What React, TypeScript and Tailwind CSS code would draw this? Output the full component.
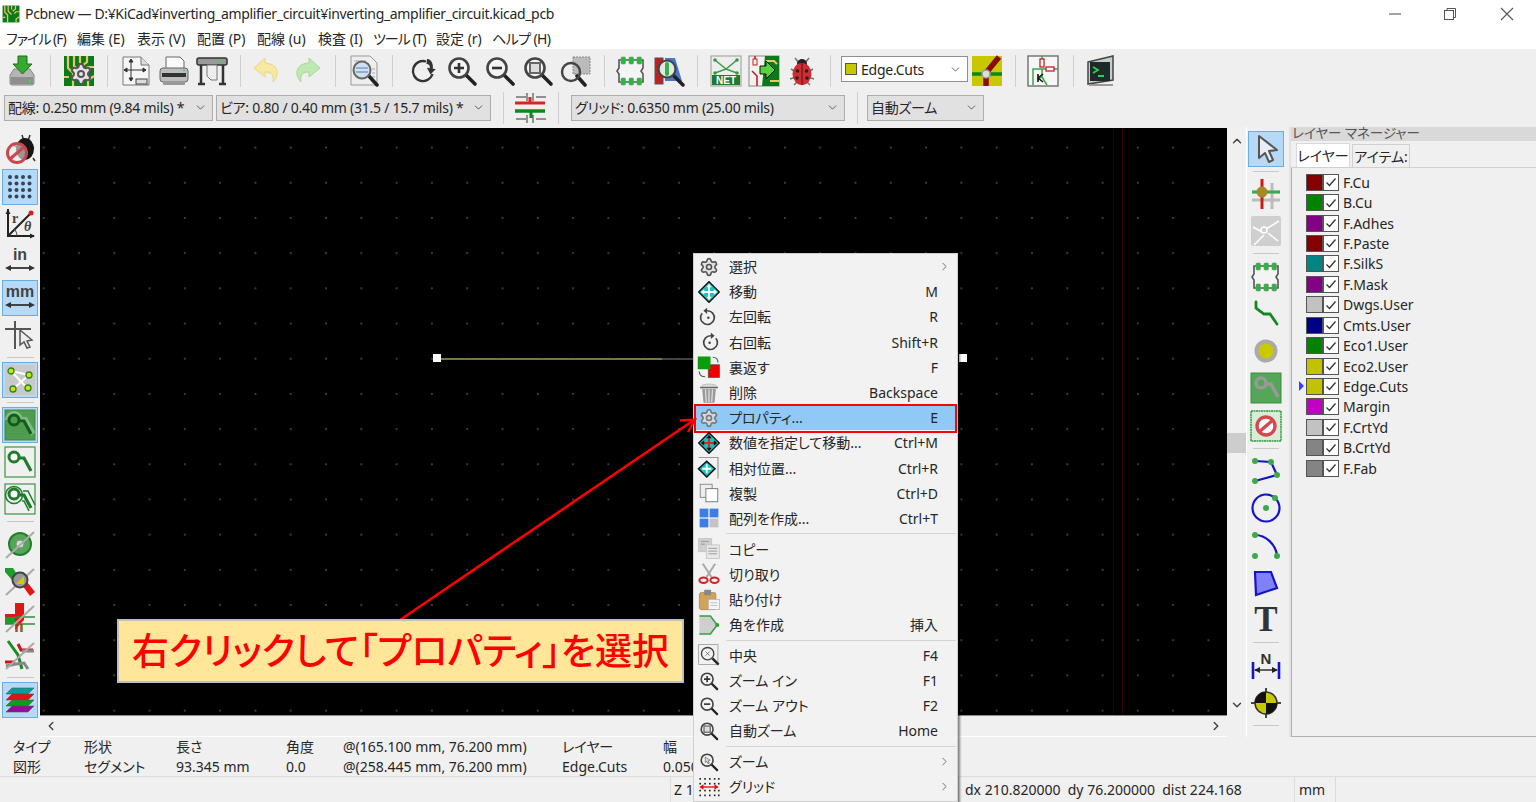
import type { ReactNode } from 'react'
import { ChevronDown, ChevronLeft, ChevronRight, ChevronUp, Settings } from 'lucide-react'

const Svg = ({ s = 32, children }: { s?: number; children: ReactNode }) => (
  <svg viewBox="0 0 32 32" width={s} height={s} className="shrink-0">{children}</svg>
)

const Mag = ({ children }: { children?: ReactNode }) => (
  <>
    <line x1="20" y1="20" x2="29" y2="29" stroke="#222" strokeWidth="3.6" strokeLinecap="round" />
    <circle cx="13" cy="13" r="9.5" fill="#f4f4f4" stroke="#444" strokeWidth="2.6" />
    {children}
  </>
)

const ZoomIn = () => <Mag><path d="M8 13h10M13 8v10" stroke="#333" strokeWidth="2.6" /></Mag>
const ZoomOut = () => <Mag><path d="M8 13h10" stroke="#333" strokeWidth="2.6" /></Mag>
const ZoomFit = () => <Mag><rect x="8" y="8" width="10" height="10" fill="#ddd" stroke="#666" strokeWidth="2" /></Mag>
const ZoomSel = () => (
  <>
    <rect x="13" y="2" width="17" height="17" fill="#bbb" stroke="#888" strokeDasharray="2 1" />
    <line x1="17" y1="21" x2="25" y2="30" stroke="#222" strokeWidth="3.6" strokeLinecap="round" />
    <circle cx="11" cy="17" r="9" fill="none" stroke="#444" strokeWidth="2.4" />
  </>
)

const Pcb = () => (
  <>
    <rect x="1" y="1" width="30" height="30" fill="#0b7a1a" />
    <path d="M5 1v12l5 5v13M11 1v10l6 6M17 1v7M24 1v6l-5 4M31 12h-6l-3 3M1 22h5M25 31v-6l6-4" stroke="#e6c66a" strokeWidth="2.2" fill="none" />
  </>
)

const Gear = ({ c = '#666', cx = 16, cy = 16 }: { c?: string; cx?: number; cy?: number }) => (
  <g transform={`translate(${cx - 12} ${cy - 12})`}>
    <Settings x={0} y={0} width={24} height={24} color={c} strokeWidth={2} fill="#e4e4e4" />
  </g>
)

const Save = () => (
  <Svg>
    <path d="M4 20 8 14h16l4 6v8a2 2 0 0 1-2 2H6a2 2 0 0 1-2-2z" fill="#b5b5b5" stroke="#888" />
    <rect x="5" y="22" width="22" height="7" fill="#8e8e8e" />
    <circle cx="24" cy="26" r="1.2" fill="#3ddc4a" />
    <path d="M12 1h9v8h5L16.500 19 7 9h5z" fill="#37a92f" stroke="#1d6d1c" />
  </Svg>
)

const BoardSetup = () => (
  <Svg><Pcb /><Gear cx={18} cy={19} c="#555" /></Svg>
)

const PageSetup = () => (
  <Svg>
    <path d="M3 2h18l8 8v20H3z" fill="#f6f6f6" stroke="#777" />
    <path d="M21 2v8h8" fill="#ddd" stroke="#777" />
    <path d="M11 4v22M4 15h22M11 4l-2 3h4zM11 26l-2-3h4zM4 15l3-2v4zM26 15l-3-2v4z" stroke="#333" fill="#333" />
    <rect x="16" y="24" width="11" height="5" fill="#ddd" stroke="#444" />
  </Svg>
)

const Printer = () => (
  <Svg>
    <path d="M8 2h14l4 4v8H8z" fill="#fafafa" stroke="#666" />
    <rect x="2" y="13" width="28" height="14" rx="3" fill="#bdbdbd" stroke="#666" />
    <rect x="4" y="18" width="24" height="4" fill="#333" />
    <rect x="5" y="26" width="22" height="4" rx="1" fill="#999" />
    <circle cx="26" cy="15.500" r="1" fill="#3ddc4a" />
  </Svg>
)

const Plotter = () => (
  <Svg>
    <rect x="1" y="3" width="30" height="7" rx="2" fill="#999" stroke="#333" strokeWidth="1.500" />
    <path d="M5 10v18M27 10v18" stroke="#333" strokeWidth="2.500" />
    <path d="M2 29h7M23 29h7" stroke="#333" strokeWidth="2.500" />
    <path d="M11 10h10v15h-6l-4-4z" fill="#eee" stroke="#777" />
    <circle cx="25" cy="6" r="1.300" fill="#3ddc4a" />
  </Svg>
)

const Undo = () => (
  <Svg><path d="M14 3 3 13l11 9v-5c6 0 9 2 8 10 6-6 7-18-8-19z" fill="#f7e9a3" stroke="#ecd67a" /></Svg>
)

const Redo = () => (
  <Svg><path d="M18 3l11 10-11 9v-5c-6 0-9 2-8 10-6-6-7-18 8-19z" fill="#bfe8b2" stroke="#a3dc93" /></Svg>
)

const Find = () => (
  <Svg>
    <path d="M3 1h19l7 7v22H3z" fill="#eee" stroke="#999" />
    <path d="M6 6h12M6 10h6M24 14h3M24 18h3M24 22h3" stroke="#aaa" />
    <line x1="20" y1="20" x2="29" y2="30" stroke="#222" strokeWidth="3.500" strokeLinecap="round" />
    <circle cx="14" cy="15" r="8.500" fill="#cfe0f2" stroke="#666" strokeWidth="2" />
    <path d="M8 13h12M8 17h12" stroke="#7d9ecb" strokeWidth="1.500" />
  </Svg>
)

const Redraw = () => (
  <Svg>
    <path d="M24.500 19A10 10 0 1 1 18 6.500" fill="none" stroke="#333" strokeWidth="2.300" />
    <path d="M18 4c4 0 7 4 7 9h3l-4.500 6L19 13h3c0-3-2-4-4-4z" fill="#333" transform="rotate(8 20 12)" />
  </Svg>
)

const Chip = () => (
  <>
    <path d="M4 5h24v8l-2 3 2 3v8H4v-8l-2-3 2-3z" fill="#f4f4f4" stroke="#555" strokeWidth="1.600" />
    <rect x="6" y="2" width="4.500" height="7" rx="1" fill="#1fbf35" stroke="#888" strokeWidth=".6" />
    <rect x="14" y="2" width="4.500" height="7" rx="1" fill="#1fbf35" stroke="#888" strokeWidth=".6" />
    <rect x="22" y="2" width="4.500" height="7" rx="1" fill="#1fbf35" stroke="#888" strokeWidth=".6" />
    <rect x="6" y="23" width="4.500" height="7" rx="1" fill="#1fbf35" stroke="#888" strokeWidth=".6" />
    <rect x="14" y="23" width="4.500" height="7" rx="1" fill="#1fbf35" stroke="#888" strokeWidth=".6" />
    <rect x="22" y="23" width="4.500" height="7" rx="1" fill="#1fbf35" stroke="#888" strokeWidth=".6" />
  </>
)

const ChipBrowse = () => (
  <Svg>
    <rect x="2" y="3" width="8" height="26" fill="#c41e1e" stroke="#555" />
    <path d="M12 3h10l7 23h-17z" fill="#4a78c9" />
    <line x1="20" y1="20" x2="30" y2="30" stroke="#222" strokeWidth="3.500" strokeLinecap="round" />
    <circle cx="14" cy="14" r="8.500" fill="#dfe9df" stroke="#444" strokeWidth="2.200" />
    <rect x="12" y="7" width="4" height="14" rx="2" fill="#3fae4a" />
  </Svg>
)

const Net = () => (
  <Svg>
    <rect x="1" y="1" width="30" height="30" fill="#eee" stroke="#999" />
    <path d="M5 5l11 9 11-9M5 18l11-4 11 4" stroke="#3a9c47" strokeWidth="1.500" fill="none" />
    <circle cx="5" cy="5" r="1.800" fill="#2f9a3e" /><circle cx="27" cy="5" r="1.800" fill="#2f9a3e" />
    <circle cx="5" cy="18" r="1.800" fill="#2f9a3e" /><circle cx="27" cy="18" r="1.800" fill="#2f9a3e" />
    <rect x="2" y="20" width="28" height="10" fill="#1f7a2d" />
    <text x="16" y="29" textAnchor="middle" fontSize="10" fontWeight="700" fill="#fff" fontFamily="Liberation Sans">NET</text>
  </Svg>
)

const UpdatePcb = () => (
  <Svg>
    <rect x="1" y="1" width="30" height="30" fill="#f2f2f2" stroke="#888" />
    <path d="M17 1h14v30H14z" fill="#0b7a1a" />
    <path d="M18 6h8l3 3M22 26h9" stroke="#e6c66a" strokeWidth="2" fill="none" />
    <path d="M7 1v8M4 16l5 5v10" stroke="#c42020" strokeWidth="1.600" fill="none" />
    <rect x="5" y="4" width="4" height="6" fill="#eee" stroke="#c42020" />
    <path d="M12 11h6V6l9 9-9 9v-5h-6z" fill="#56d13f" stroke="#111" />
  </Svg>
)

const Bug = () => (
  <Svg>
    <path d="M9 3l4 5M23 3l-4 5M5 14l5 3M27 14l-5 3M4 24l6-2M28 24l-6-2M8 30l4-4M24 30l-4-4" stroke="#777" strokeWidth="1.600" />
    <circle cx="16" cy="9" r="5" fill="#222" />
    <ellipse cx="16" cy="19" rx="9.500" ry="11" fill="#cf2d33" />
    <path d="M16 8v22" stroke="#5a1215" />
    <circle cx="11.500" cy="16" r="1.800" fill="#222" /><circle cx="20.500" cy="16" r="1.800" fill="#222" />
    <circle cx="11" cy="23" r="1.800" fill="#222" /><circle cx="21" cy="23" r="1.800" fill="#222" />
  </Svg>
)

const LayerPair = () => (
  <Svg>
    <rect x="1" y="1" width="30" height="30" fill="#c8c800" />
    <path d="M1 19h30" stroke="#0a8a18" strokeWidth="3.500" />
    <path d="M28 2 15 18v13" stroke="#8a0b0b" strokeWidth="5.500" fill="none" />
    <circle cx="15" cy="19" r="4" fill="#ddd" stroke="#999" strokeWidth="1.500" />
  </Svg>
)

const Eeschema = () => (
  <Svg>
    <rect x="1" y="1" width="30" height="30" fill="#f6f6f6" stroke="#777" strokeWidth="1.500" />
    <path d="M15 1v8M15 14H6v16M15 14h5M26 14h5M15 14v8l5 8M15 22l-5 2" stroke="#3ea34a" strokeWidth="1.500" fill="none" />
    <rect x="13" y="4" width="4" height="8" fill="#fff" stroke="#c42020" strokeWidth="1.300" />
    <rect x="19" y="12" width="8" height="4" fill="#fff" stroke="#c42020" strokeWidth="1.300" />
    <path d="M11 19v8M11 23l5-4M11 23l5 4" stroke="#111" strokeWidth="1.600" />
  </Svg>
)

const Terminal = () => (
  <Svg>
    <path d="M3 7 28 1v24L3 29z" fill="#ccc" stroke="#444" strokeWidth="1.500" />
    <rect x="5" y="7" width="20" height="19" fill="#1c2a2a" />
    <path d="M8 12l5 3-5 3M13 21h6" stroke="#2fd24a" strokeWidth="1.800" fill="none" />
    <path d="M4 30h24" stroke="#999" strokeWidth="2" />
  </Svg>
)

const TrackMode = () => (
  <Svg>
    <path d="M2 5h10M22 5h10M13 1v8M19 1v8" stroke="#333" strokeWidth="1" fill="none" />
    <path d="M1 11h30" stroke="#d22" strokeWidth="3" />
    <path d="M16 5v6" stroke="#d22" strokeWidth="3" />
    <path d="M1 19h30" stroke="#0a8a18" strokeWidth="3.500" />
    <path d="M17 19v7" stroke="#0a8a18" strokeWidth="3" />
    <path d="M2 27h10M22 27h10M13 23v8M19 23v8" stroke="#333" strokeWidth="1" fill="none" />
  </Svg>
)

const NoDrc = () => (
  <Svg>
    <path d="M18 1l2 6M26 1l-2 6M13 13l-4-2M29 24l2 3M30 13l-3 2" stroke="#333" strokeWidth="1.500" />
    <ellipse cx="21" cy="15" rx="9" ry="11" fill="#151515" />
    <circle cx="13" cy="19" r="9.500" fill="#eee" fillOpacity=".6" stroke="#c9484f" strokeWidth="3" />
    <path d="M6 25 20 13" stroke="#c9484f" strokeWidth="3" />
  </Svg>
)

const GridDots = () => (
  <Svg>
    {[6, 12.500, 19, 25.500].flatMap(y => [6, 12.500, 19, 25.500].map(x => <circle key={`${x}-${y}`} cx={x} cy={y} r="2" fill="#33465c" />))}
  </Svg>
)

const Polar = () => (
  <Svg>
    <path d="M4 1v27h26M4 28 26 6" stroke="#222" strokeWidth="2" fill="none" />
    <path d="M4 1 1.500 6h5zM31 28l-5-2.500v5z" fill="#222" />
    <circle cx="27" cy="5" r="2.500" fill="#e21a1a" />
    <path d="M13 28c0-3-1-5-3-7" stroke="#444" fill="none" />
    <text x="8" y="15" fontSize="14" fontWeight="700" fill="#444" fontFamily="Liberation Serif">r</text>
    <text x="20" y="23" fontSize="14" fontWeight="700" fontStyle="italic" fill="#444" fontFamily="Liberation Serif">θ</text>
  </Svg>
)

const Unit = ({ t, fs = 16 }: { t: string; fs?: number }) => (
  <Svg>
    <text x="16" y="15" textAnchor="middle" fontSize={fs} fontWeight="700" fill="#444" fontFamily="Liberation Sans">{t}</text>
    <path d="M3 23h26" stroke="#333" strokeWidth="1.800" />
    <path d="M1 23l6-3v6zM31 23l-6-3v6z" fill="#333" />
  </Svg>
)

const CursorCross = () => (
  <Svg>
    <path d="M11 2v28M1 10h26" stroke="#555" strokeWidth="2" />
    <path d="M16 11l0 15 4-3 3 6 3-1-3-6 5-1z" fill="#eee" stroke="#555" strokeWidth="1.500" />
  </Svg>
)

const Ratsnest = () => (
  <Svg>
    <rect x="1" y="1" width="30" height="30" fill="#c9c9c9" />
    <path d="M7 7l18 4M9 25 25 11M7 7l17 18" stroke="#fff" strokeWidth="2" />
    {[[7, 7], [25, 11], [9, 25], [24, 24]].map(([x, y]) => <circle key={x} cx={x} cy={y} r="3" fill="#dede00" stroke="#1a8c22" strokeWidth="1.300" />)}
  </Svg>
)

const Track = ({ c = '#1f7d2a', c2 = '#fff' }: { c?: string; c2?: string }) => (
  <>
    <circle cx="10" cy="11" r="5" fill={c2} stroke={c} strokeWidth="3" />
    <path d="M15 12h5l7 13" stroke={c} strokeWidth="3.200" fill="none" />
  </>
)

const ZoneFill = () => (
  <Svg>
    <rect x="1" y="1" width="30" height="30" fill="#4f9c50" stroke="#3a8c3c" />
    <path d="M4 11a6 6 0 1 1 12 0h5l8 14" stroke="#e7f4e7" strokeWidth="6" fill="none" opacity=".35" />
    <Track c="#0f5e1a" c2="#4f9c50" />
  </Svg>
)

const ZoneLine = () => (
  <Svg>
    <rect x="1" y="1" width="30" height="30" fill="none" stroke="#4e9c53" strokeWidth="1.300" />
    <Track />
  </Svg>
)

const ZoneOutline = () => (
  <Svg>
    <rect x="1" y="1" width="30" height="30" fill="none" stroke="#4e9c53" strokeWidth="1.300" />
    <circle cx="10" cy="12" r="8.500" fill="none" stroke="#1f7d2a" strokeWidth="1.500" />
    <path d="M19 8h5l7 14M18 18h2l5 10" stroke="#1f7d2a" strokeWidth="1.500" fill="none" />
    <Track />
  </Svg>
)

const Slash = () => <path d="M2 30 30 4" stroke="#aaa" strokeWidth="2" />

const ViaOff = () => (
  <Svg>
    <circle cx="16" cy="16" r="11" fill="#56a659" stroke="#257d2c" strokeWidth="2" />
    <circle cx="16" cy="16" r="4" fill="#cfe3cf" stroke="#888" />
    <Slash />
  </Svg>
)

const TrackClear = () => (
  <Svg>
    <path d="M1 3 9 3 14 11 8 15 1 7z" fill="#1aa02a" />
    <path d="M18 20 23 17 31 27 26 31z" fill="#e11616" />
    <Slash />
    <circle cx="16" cy="15" r="7.500" fill="#999" stroke="#444" strokeWidth="2" />
    <path d="M12 19 20 11v8z" fill="#d7c800" />
  </Svg>
)

const PadOff = () => (
  <Svg>
    <path d="M11 1h9v17l-9 10V18H1v-6h10z" fill="#e11616" />
    <rect x="1" y="15" width="10" height="7" fill="#1a9c2a" />
    <path d="M11 22h20M1 22h10M12 22v8M18 22v8M11 15h20" stroke="#2f8c36" strokeWidth="1.500" />
    <path d="M13 22v8M17 22v8" stroke="#e11616" strokeWidth="1.300" />
    <Slash />
  </Svg>
)

const MultiTrack = () => (
  <Svg>
    <path d="M2 2 12 16l4 14" stroke="#1a8c2a" strokeWidth="3" fill="none" transform="translate(2 0)" />
    <path d="M14 5l3 6h12" stroke="#d11414" strokeWidth="3" fill="none" />
    <path d="M18 12h12" stroke="#888" strokeWidth="3" />
    <path d="M1 23h10" stroke="#d11414" strokeWidth="3" />
    <path d="M2 27l10-2 8-1 4 6" stroke="#888" strokeWidth="3" fill="none" />
    <Slash />
  </Svg>
)

const Layers = () => (
  <Svg>
    <path d="M8 4h22l-6 6H2z" fill="#0a9c9c" stroke="#555" strokeWidth=".6" />
    <path d="M8 10h22l-6 6H2z" fill="#e01212" stroke="#555" strokeWidth=".6" />
    <path d="M8 16h22l-6 6H2z" fill="#0e9c1e" stroke="#555" strokeWidth=".6" />
    <path d="M8 22h22l-6 6H2z" fill="#980a98" stroke="#555" strokeWidth=".6" />
  </Svg>
)

const Arrow = () => (
  <Svg><path d="M9 3l0 22 6-5 4 9 4-2-4-9 8-1z" fill="#e8eef4" stroke="#555" strokeWidth="2" strokeLinejoin="round" /></Svg>
)

const LocalRats = () => (
  <Svg>
    <path d="M2 14h28M2 22h28M22 5v26" stroke="#bcbcbc" strokeWidth="3" />
    <path d="M2 14h28" stroke="#39ad45" strokeWidth="3" />
    <path d="M12 1v30" stroke="#d01818" strokeWidth="3" />
    <circle cx="12" cy="14" r="5.500" fill="#a58a26" />
  </Svg>
)

const RatsOff = () => (
  <Svg>
    <rect x="1" y="1" width="30" height="30" rx="2" fill="#cfcfcf" />
    <path d="M3 12l9 5M29 6 16 14M14 20 4 30M18 18l10 8" stroke="#fff" strokeWidth="1.500" />
    <circle cx="14" cy="15" r="3" fill="none" stroke="#fff" strokeWidth="1.500" />
  </Svg>
)

const ChipSmall = () => <Svg><Chip /></Svg>

const Wire = () => (
  <Svg><path d="M6 4v6l8 6h6l7 10" stroke="#138a20" strokeWidth="2.800" fill="none" strokeLinecap="round" /></Svg>
)

const ViaAdd = () => (
  <Svg><circle cx="16" cy="16" r="9.500" fill="#c9c900" stroke="#aaa" strokeWidth="4" /></Svg>
)

const ZoneGray = () => (
  <Svg>
    <rect x="1" y="1" width="30" height="30" fill="#56a659" stroke="#3d8c40" />
    <circle cx="11" cy="11" r="5" fill="none" stroke="#999" strokeWidth="3.400" />
    <path d="M16 12h5l7 13" stroke="#999" strokeWidth="3.600" fill="none" />
  </Svg>
)

const Keepout = () => (
  <Svg>
    <rect x="1" y="1" width="30" height="30" fill="#d9ecd9" stroke="#2f9c3c" strokeWidth="1.500" strokeDasharray="2 0.500" />
    <circle cx="16" cy="16" r="9" fill="#fff" stroke="#d6474e" strokeWidth="3.400" />
    <path d="M9 22 23 10" stroke="#d6474e" strokeWidth="3.400" />
  </Svg>
)

const Dots = ({ p }: { p: number[][] }) => (
  <>{p.map(([x, y]) => <circle key={`${x}${y}`} cx={x} cy={y} r="3" fill="#3fa84c" />)}</>
)

const Poly = () => (
  <Svg><path d="M5 6l16 1 6 13-22 6" stroke="#1414c8" strokeWidth="2.200" fill="none" /><Dots p={[[5, 6], [21, 7], [27, 20], [5, 26]]} /></Svg>
)

const CircleAdd = () => (
  <Svg><circle cx="16" cy="16" r="13.500" stroke="#1414c8" strokeWidth="2.200" fill="none" /><Dots p={[[16, 16], [25, 6]]} /></Svg>
)

const ArcAdd = () => (
  <Svg><path d="M5 5c11 0 20 9 22 20" stroke="#1414c8" strokeWidth="2.200" fill="none" /><Dots p={[[5, 5], [5, 26], [27, 26]]} /></Svg>
)

const ZoneAdd = () => (
  <Svg><path d="M5 5h16l6 16-21 7z" fill="#8181f7" stroke="#1414c8" strokeWidth="2.200" /></Svg>
)

const TextAdd = () => (
  <span className="h-[36px] flex items-center text-[#333] text-[35px] leading-[36px] font-bold [font-family:'Liberation_Serif',serif]">T</span>
)

const Dimension = () => (
  <Svg>
    <text x="16" y="14" textAnchor="middle" fontSize="15" fontWeight="700" fill="#333" fontFamily="Liberation Sans">N</text>
    <path d="M3 12v17M29 12v17" stroke="#1414c8" strokeWidth="2.600" />
    <path d="M5 20h22" stroke="#222" strokeWidth="1.400" />
    <path d="M4 20l6-3v6zM28 20l-6-3v6z" fill="#222" />
  </Svg>
)

const Target = () => (
  <Svg>
    <path d="M16 1v30M1 16h30" stroke="#444" strokeWidth="2" />
    <circle cx="16" cy="16" r="11" fill="#c9c900" stroke="#333" strokeWidth="1.500" />
    <path d="M16 5a11 11 0 0 0-11 11h11zM16 27a11 11 0 0 0 11-11H16z" fill="#111" />
  </Svg>
)

/* menu icons */
const MoveIcon = ({ red }: { red?: boolean }) => (
  <Svg s={22}>
    <path d="M16 1 31 16 16 31 1 16z" fill="#19c4c4" stroke="#111" strokeWidth="2" />
    <path d="M16 6v20M6 16h20" stroke={red ? '#d42a2a' : '#fff'} strokeWidth="3" />
    <path d="M16 4l-4 5h8zM16 28l-4-5h8zM4 16l5-4v8zM28 16l-5-4v8z" fill={red ? '#111' : '#fff'} />
  </Svg>
)

const RotIcon = ({ flip }: { flip?: boolean }) => (
  <Svg s={20}>
    <g transform={flip ? 'matrix(-1 0 0 1 32 0)' : undefined}>
      <path d="M13 6a11 11 0 1 1-8 4" fill="none" stroke="#444" strokeWidth="2.600" />
      <path d="M13 1v10l-6-5z" fill="#444" />
      <circle cx="15" cy="17" r="2" fill="#444" />
    </g>
  </Svg>
)

const FlipIcon = () => (
  <Svg s={24}>
    <rect x="15" y="13" width="15" height="17" fill="#e00" stroke="#555" />
    <rect x="1" y="2" width="17" height="17" fill="#0a9c0a" />
    <path d="M21 3c4 0 7 3 7 7M3 22c0 4 3 7 8 7" stroke="#555" strokeWidth="1.500" fill="none" />
  </Svg>
)

const Trash = () => (
  <Svg s={22}>
    <path d="M5 6c2-4 20-4 22 0" fill="#ddd" stroke="#aaa" />
    <path d="M3 8h26" stroke="#666" strokeWidth="2.400" />
    <path d="M6 10l2 20h16l2-20z" fill="#999" />
    <path d="M11 11l1 18M16 11v18M21 11l-1 18" stroke="#eee" strokeWidth="1.500" />
  </Svg>
)

const RelPos = () => (
  <Svg s={24}>
    <path d="M2 2h26v28" stroke="#999" strokeWidth="1.600" fill="none" />
    <path d="M13 7l11 10-11 11L2 17z" fill="#19c4c4" stroke="#111" strokeWidth="2" />
    <path d="M13 11v12M7 17h12" stroke="#fff" strokeWidth="2.500" />
  </Svg>
)

const Dup = () => (
  <Svg s={20}>
    <rect x="2" y="2" width="19" height="21" fill="#eee" stroke="#888" strokeWidth="1.500" />
    <rect x="11" y="9" width="19" height="21" fill="#fff" stroke="#777" strokeWidth="1.500" />
  </Svg>
)

const ArrayIcon = () => (
  <Svg s={20}>
    <rect x="1" y="1" width="14" height="14" fill="#3d7ee6" />
    <rect x="17" y="1" width="14" height="14" fill="#3d7ee6" />
    <rect x="1" y="17" width="14" height="14" fill="#3d7ee6" />
    <rect x="17" y="17" width="14" height="14" fill="#c4c4c4" />
  </Svg>
)

const Copy = () => (
  <Svg s={22}>
    <rect x="1" y="1" width="19" height="19" fill="#cfcfcf" stroke="#bbb" />
    <rect x="12" y="10" width="19" height="20" fill="#e8e8e8" stroke="#bbb" />
    <path d="M4 5h12M4 9h6M15 15h13M15 19h13M15 23h13" stroke="#999" strokeWidth="1.400" />
  </Svg>
)

const Cut = () => (
  <Svg s={22}>
    <path d="M7 1l13 20M25 1 12 21" stroke="#aaa" strokeWidth="3" />
    <ellipse cx="8" cy="25" rx="6" ry="4" fill="none" stroke="#d2232a" strokeWidth="3" />
    <ellipse cx="24" cy="25" rx="6" ry="4" fill="none" stroke="#d2232a" strokeWidth="3" />
  </Svg>
)

const Paste = () => (
  <Svg s={22}>
    <rect x="2" y="5" width="24" height="25" rx="3" fill="#d2a458" stroke="#a27c3e" />
    <rect x="9" y="1" width="10" height="8" rx="1" fill="#888" />
    <rect x="15" y="15" width="16" height="15" fill="#f4f4f4" stroke="#aaa" />
    <path d="M18 20h10M18 24h10" stroke="#aaa" />
  </Svg>
)

const Corner = () => (
  <Svg s={22}>
    <path d="M2 3h16l10 13-10 13H2z" fill="#cfcfcf" />
    <path d="M2 3h16l10 13-10 13H2" fill="none" stroke="#35a040" strokeWidth="2.200" />
    <circle cx="28" cy="16" r="3" fill="#35a040" />
  </Svg>
)

const Center = () => (
  <Svg s={22}>
    <rect x="1" y="1" width="28" height="29" fill="none" stroke="#888" />
    <line x1="21" y1="21" x2="30" y2="30" stroke="#222" strokeWidth="3.400" />
    <circle cx="14" cy="14" r="9" fill="#f2f2f2" stroke="#444" strokeWidth="2" />
    <path d="M11 11l6 6M17 11l-6 6" stroke="#555" />
  </Svg>
)

const ZoomMenu = () => (
  <Svg s={20}><Mag><path d="M10 8v9l2.500-2 2 4 2-1-2-4 3.500-1z" fill="#ddd" stroke="#555" /></Mag></Svg>
)

const GridMenu = () => (
  <Svg s={22}>
    {[3, 10, 17, 24, 30].flatMap(x => [4, 11, 21, 28].map(y => <rect key={`${x}-${y}`} x={x - 1} y={y - 1} width="2.400" height="2.400" fill="#222" />))}
    <path d="M4 16h24" stroke="#e01212" strokeWidth="2" />
    <path d="M2 16l6-4v8zM30 16l-6-4v8z" fill="#e01212" />
  </Svg>
)

const Sep = ({ ml = 9, mr = 9 }: { ml?: number; mr?: number }) => (
  <div className="w-px h-[32px] bg-[#cfcfcf] shrink-0" style={{ marginLeft: ml, marginRight: mr }} />
)

const Tool = ({ children }: { children: ReactNode }) => (
  <div className="w-[38px] h-[38px] flex items-center justify-center shrink-0">{children}</div>
)

const Combo = ({ w, label, white, swatch }: { w: string; label: string; white?: boolean; swatch?: boolean }) => (
  <div className={`${w} h-[26px] flex items-center justify-between shrink-0 border pl-[3px] pr-[5px] text-[14px] tracking-[-0.25px] ${white ? 'bg-white border-[#8f8f8f] mb-[3px]' : 'bg-[#e1e1e1] border-[#adadad]'}`}>
    <span className="flex items-center gap-[4px] whitespace-nowrap">
      {swatch && <span className="w-[12px] h-[12px] bg-[#c8c800] border border-[#555]" />}
      {label}
    </span>
    <ChevronDown size={13} strokeWidth={1.5} className="shrink-0 text-[#444]" />
  </div>
)

const MENU_LABELS = [
  { label: 'ファイル (F)', w: 'w-[71px] tracking-[-1px]' },
  { label: '編集 (E)', w: 'w-[60px]' },
  { label: '表示 (V)', w: 'w-[60px]' },
  { label: '配置 (P)', w: 'w-[60px]' },
  { label: '配線 (u)', w: 'w-[61px]' },
  { label: '検査 (I)', w: 'w-[55px]' },
  { label: 'ツール (T)', w: 'w-[63px] tracking-[-1px]' },
  { label: '設定 (r)', w: 'w-[56px]' },
  { label: 'ヘルプ (H)', w: 'w-[70px] tracking-[-0.6px]' },
]

const LEFT_TOOLS = [
  { el: <NoDrc /> },
  { el: <GridDots />, on: true },
  { el: <Polar /> },
  { el: <Unit t="in" /> },
  { el: <Unit t="mm" />, on: true },
  { el: <CursorCross /> },
  null,
  { el: <Ratsnest />, on: true },
  null,
  { el: <ZoneFill />, on: true },
  { el: <ZoneLine /> },
  { el: <ZoneOutline /> },
  null,
  { el: <ViaOff /> },
  { el: <TrackClear /> },
  { el: <PadOff /> },
  { el: <MultiTrack /> },
  null,
  { el: <Layers />, on: true },
]

const RIGHT_TOOLS = [
  { el: <Arrow />, on: true },
  null,
  { el: <LocalRats /> },
  { el: <RatsOff /> },
  null,
  { el: <ChipSmall /> },
  { el: <Wire /> },
  { el: <ViaAdd /> },
  { el: <ZoneGray /> },
  { el: <Keepout /> },
  null,
  { el: <Poly /> },
  { el: <CircleAdd /> },
  { el: <ArcAdd /> },
  { el: <ZoneAdd /> },
  { el: <TextAdd /> },
  null,
  { el: <Dimension /> },
  { el: <Target /> },
  null,
]

const LAYERS = [
  { name: 'F.Cu', c: 'bg-[#840000]' },
  { name: 'B.Cu', c: 'bg-[#008400]' },
  { name: 'F.Adhes', c: 'bg-[#840084]' },
  { name: 'F.Paste', c: 'bg-[#840000]' },
  { name: 'F.SilkS', c: 'bg-[#008484]' },
  { name: 'F.Mask', c: 'bg-[#840084]' },
  { name: 'Dwgs.User', c: 'bg-[#c2c2c2]' },
  { name: 'Cmts.User', c: 'bg-[#000084]' },
  { name: 'Eco1.User', c: 'bg-[#008400]' },
  { name: 'Eco2.User', c: 'bg-[#c2c200]' },
  { name: 'Edge.Cuts', c: 'bg-[#c2c200]', cur: true },
  { name: 'Margin', c: 'bg-[#c200c2]' },
  { name: 'F.CrtYd', c: 'bg-[#c2c2c2]' },
  { name: 'B.CrtYd', c: 'bg-[#848484]' },
  { name: 'F.Fab', c: 'bg-[#848484]' },
]

type MenuRow = { icon?: ReactNode; label?: string; k?: string; sub?: boolean; sel?: boolean }

const MENU: MenuRow[] = [
  { icon: <Settings size={20} color="#555" fill="#e4e4e4" />, label: '選択', sub: true },
  { icon: <MoveIcon />, label: '移動', k: 'M' },
  { icon: <RotIcon />, label: '左回転', k: 'R' },
  { icon: <RotIcon flip />, label: '右回転', k: 'Shift+R' },
  { icon: <FlipIcon />, label: '裏返す', k: 'F' },
  { icon: <Trash />, label: '削除', k: 'Backspace' },
  { icon: <Settings size={20} color="#777" fill="#cfd9e2" />, label: 'プロパティ...', k: 'E', sel: true },
  { icon: <MoveIcon red />, label: '数値を指定して移動...', k: 'Ctrl+M' },
  { icon: <RelPos />, label: '相対位置...', k: 'Ctrl+R' },
  { icon: <Dup />, label: '複製', k: 'Ctrl+D' },
  { icon: <ArrayIcon />, label: '配列を作成...', k: 'Ctrl+T' },
  {},
  { icon: <Copy />, label: 'コピー' },
  { icon: <Cut />, label: '切り取り' },
  { icon: <Paste />, label: '貼り付け' },
  { icon: <Corner />, label: '角を作成', k: '挿入' },
  {},
  { icon: <Center />, label: '中央', k: 'F4' },
  { icon: <Svg s={20}><ZoomIn /></Svg>, label: 'ズーム イン', k: 'F1' },
  { icon: <Svg s={20}><ZoomOut /></Svg>, label: 'ズーム アウト', k: 'F2' },
  { icon: <Svg s={20}><ZoomFit /></Svg>, label: '自動ズーム', k: 'Home' },
  {},
  { icon: <ZoomMenu />, label: 'ズーム', sub: true },
  { icon: <GridMenu />, label: 'グリッド', sub: true },
]

const MSG = [
  { w: 'w-[71px]', a: 'タイプ', b: '図形' },
  { w: 'w-[92px]', a: '形状', b: 'セグメント' },
  { w: 'w-[110px]', a: '長さ', b: '93.345 mm' },
  { w: 'w-[57px]', a: '角度', b: '0.0' },
  { w: 'w-[219px]', a: '@(165.100 mm, 76.200 mm)', b: '@(258.445 mm, 76.200 mm)' },
  { w: 'w-[101px]', a: 'レイヤー', b: 'Edge.Cuts' },
  { w: 'w-[60px]', a: '幅', b: '0.050 mm' },
]

export default function App() {
  return (
    <div className="relative w-[1536px] h-[802px] overflow-hidden flex flex-col bg-[#f0f0f0] text-[#262626] text-[14px] [font-family:'Noto_Sans','Noto_Sans_CJK_JP',sans-serif] [font-feature-settings:'palt']">

      {/* Title + menu */}
      <div className="h-[49px] bg-white shrink-0">
        <div className="h-[27px] flex items-center relative">
          <div className="ml-[2px] mr-[5px]"><Svg s={18}><Pcb /></Svg></div>
          <span className="whitespace-nowrap text-[14px] tracking-[-0.33px]">Pcbnew — D:¥KiCad¥inverting_amplifier_circuit¥inverting_amplifier_circuit.kicad_pcb</span>
          <div className="ml-auto flex items-center">
            <div className="w-[55px] flex justify-center"><svg width="14" height="14" viewBox="0 0 14 14"><path d="M1 7h12" stroke="#666" strokeWidth="1.200" /></svg></div>
            <div className="w-[56px] flex justify-center"><svg width="14" height="14" viewBox="0 0 14 14" fill="none" stroke="#555"><rect x="1.500" y="3.500" width="9" height="9" /><path d="M4 3.500V1.500h8.500v9h-2" /></svg></div>
            <div className="w-[58px] flex justify-center"><svg width="14" height="14" viewBox="0 0 14 14"><path d="M1 1l12 12M13 1 1 13" stroke="#555" strokeWidth="1.100" /></svg></div>
          </div>
        </div>
        <div className="h-[22px] flex items-center pl-[6px]">
          {MENU_LABELS.map(m => <span key={m.label} className={`${m.w} whitespace-nowrap text-[14px] shrink-0`}>{m.label}</span>)}
        </div>
      </div>

      {/* Main toolbar */}
      <div className="h-[43px] shrink-0 flex items-center pl-[3px] bg-[#efefef]">
        <Tool><Save /></Tool>
        <Sep />
        <Tool><BoardSetup /></Tool>
        <Sep />
        <Tool><PageSetup /></Tool>
        <Tool><Printer /></Tool>
        <Tool><Plotter /></Tool>
        <Sep mr={7} />
        <Tool><Undo /></Tool>
        <div className="w-[2px]" />
        <Tool><Redo /></Tool>
        <Sep />
        <Tool><Find /></Tool>
        <Sep mr={12} />
        <Tool><Redraw /></Tool>
        <Tool><Svg><ZoomIn /></Svg></Tool>
        <Tool><Svg><ZoomOut /></Svg></Tool>
        <Tool><Svg><ZoomFit /></Svg></Tool>
        <Tool><Svg><ZoomSel /></Svg></Tool>
        <Sep mr={7} />
        <Tool><ChipSmall /></Tool>
        <Tool><ChipBrowse /></Tool>
        <Sep />
        <Tool><Net /></Tool>
        <Tool><UpdatePcb /></Tool>
        <Tool><Bug /></Tool>
        <Sep ml={9} mr={10} />
        <Combo w="w-[127px]" label="Edge.Cuts" white swatch />
        <Tool><LayerPair /></Tool>
        <Sep ml={9} mr={8} />
        <Tool><Eeschema /></Tool>
        <Sep ml={11} mr={8} />
        <Tool><Terminal /></Tool>
      </div>

      {/* Aux toolbar */}
      <div className="h-[35px] shrink-0 flex items-center pl-[4px] pb-[4px] bg-[#efefef]">
        <Combo w="w-[209px]" label="配線: 0.250 mm (9.84 mils) *" />
        <div className="w-[3px]" />
        <Combo w="w-[275px]" label="ビア: 0.80 / 0.40 mm (31.5 / 15.7 mils) *" />
        <Sep ml={12} mr={7} />
        <Tool><TrackMode /></Tool>
        <Sep ml={9} mr={12} />
        <Combo w="w-[274px]" label="グリッド: 0.6350 mm (25.00 mils)" />
        <Sep ml={12} mr={9} />
        <Combo w="w-[117px]" label="自動ズーム" />
      </div>

      {/* Work area */}
      <div className="h-[610px] shrink-0 flex">
        <div className="w-[40px] shrink-0 flex flex-col items-center pt-[4px] bg-[#f0f0f0]">
          {LEFT_TOOLS.map((t, i) => t ? (
            <div key={i} className="h-[37px] w-full flex items-center justify-center shrink-0">
              <div className={`w-[36px] h-[36px] flex items-center justify-center border ${t.on ? 'bg-[#b5d9f7] border-[#64aeea]' : 'border-transparent'}`}>{t.el}</div>
            </div>
          ) : (
            <div key={i} className="h-[8px] w-full flex items-center justify-center shrink-0"><div className="w-[27px] h-px bg-[#c8c8c8]" /></div>
          ))}
        </div>

        <div className="w-[1187px] shrink-0 flex flex-col">
          <div className="relative mt-[1px] h-[588px] shrink-0 bg-black border-b border-[#8a8a8a] bg-[radial-gradient(circle,#555_0.6px,transparent_0.9px)] bg-[size:35.3px_35.2px] bg-[position:-14px_2px]">
            <div className="absolute left-[1073px] top-0 bottom-0 w-px bg-[#300000]" />
            <div className="absolute left-[1082px] top-0 bottom-0 w-px bg-[#300000]" />
            <div className="absolute left-[400px] top-[230px] w-[222px] h-[1.5px] bg-[#77773a]" />
            <div className="absolute left-[622px] top-[230px] w-[40px] h-[1.5px] bg-[#444]" />
            <div className="absolute left-[393px] top-[226px] w-[8px] h-[8px] bg-white" />
            <div className="absolute left-[919px] top-[226px] w-[8px] h-[8px] bg-white" />
          </div>
          <div className="flex-1 flex items-center justify-between pl-[4px] pr-[4px] border-b border-white">
            <ChevronLeft size={14} strokeWidth={2.5} className="text-[#444]" />
            <ChevronRight size={14} strokeWidth={2.5} className="text-[#444]" />
          </div>
        </div>

        <div className="w-[20px] shrink-0 flex flex-col items-center pb-[25px] border-r border-white">
          <div className="h-[27px] flex items-center"><ChevronUp size={14} strokeWidth={2.5} className="text-[#444]" /></div>
          <div className="mt-[279px] w-full h-[20px] bg-[#cdcdcd]" />
          <div className="mt-auto h-[14px] flex items-center"><ChevronDown size={14} strokeWidth={2.5} className="text-[#444]" /></div>
        </div>

        <div className="w-[44px] shrink-0 flex flex-col items-center pt-[3px] pr-[4px] border-r-2 border-[#e2e2e2]">
          {RIGHT_TOOLS.map((t, i) => t ? (
            <div key={i} className="h-[37.3px] w-full flex items-center justify-center shrink-0">
              <div className={`w-[36px] h-[36px] flex items-center justify-center border ${t.on ? 'bg-[#b5d9f7] border-[#64aeea]' : 'border-transparent'}`}>{t.el}</div>
            </div>
          ) : (
            <div key={i} className="h-[8px] w-full flex items-center justify-center shrink-0"><div className="w-[26px] h-px bg-[#c8c8c8]" /></div>
          ))}
        </div>

        {/* Layer manager */}
        <div className="flex-1 flex flex-col min-w-0">
          <div className="h-[14px] shrink-0 bg-[#d9d9d9] pl-[1px] text-[13.5px] leading-[13px] text-[#555] whitespace-nowrap">レイヤー マネージャー</div>
          <div className="h-[27px] shrink-0 flex items-end pl-[5px] border-b border-[#d0d0d0] gap-[2px]">
            <div className="w-[54px] h-[24px] bg-white border border-b-0 border-[#d9d9d9] flex items-center justify-center text-[14px] whitespace-nowrap">レイヤー</div>
            <div className="w-[58px] h-[23px] bg-[#f0f0f0] border border-b-0 border-[#d0d0d0] flex items-center justify-center text-[14px] whitespace-nowrap">アイテム:</div>
          </div>
          <div className="flex-1 border-l border-b border-[#b0b0b0] pt-[4px] pl-[14px]">
            {LAYERS.map(l => (
              <div key={l.name} className="relative h-[20.43px] flex items-center">
                {l.cur && <span className="absolute left-[-7px] w-0 h-0 border-y-[5px] border-y-transparent border-l-[5px] border-l-[#3b3bff]" />}
                <span className={`w-[17px] h-[17px] border border-[#555] ${l.c}`} />
                <span className="w-[16px] h-[17px] bg-white border border-[#555] flex items-center justify-center">
                  <svg width="12" height="12" viewBox="0 0 12 12"><path d="M1.500 6.500 4.500 9.500 10.500 2.500" stroke="#333" strokeWidth="1.300" fill="none" /></svg>
                </span>
                <span className="ml-[4px] text-[14px]">{l.name}</span>
              </div>
            ))}
          </div>
        </div>
      </div>

      {/* Message panel */}
      <div className="h-[40px] shrink-0 flex pl-[13px] border-b border-[#dcdcdc]">
        {MSG.map(m => (
          <div key={m.a} className={`${m.w} shrink-0 whitespace-nowrap text-[14px] leading-[20px]`}>
            <div>{m.a}</div>
            <div>{m.b}</div>
          </div>
        ))}
      </div>

      {/* Status bar */}
      <div className="flex-1 flex items-center text-[14px]">
        <div className="w-[671px] h-full border-r border-[#dcdcdc] shrink-0" />
        <div className="w-[288px] h-full shrink-0 pl-[3px] flex items-center border-r border-[#dcdcdc]">Z 1</div>
        <div className="w-[336px] h-full shrink-0 pl-[6px] flex items-center border-r border-[#dcdcdc] whitespace-pre">dx 210.820000  dy 76.200000  dist 224.168</div>
        <div className="w-[41px] h-full shrink-0 pl-[4px] flex items-center border-r border-[#dcdcdc]">mm</div>
      </div>

      {/* Context menu */}
      <div className="absolute left-[693px] top-[253px] w-[265px] h-[549px] bg-[#f2f2f2] border border-[#cfcfcf] shadow-[2px_1px_2px_rgba(0,0,0,0.45)]">
        {MENU.map((r, i) => r.label ? (
          <div key={i} className={`relative h-[25.2px] flex items-center ${r.sel ? 'bg-[#90c8f6]' : ''}`}>
            <span className="w-[28px] ml-[1px] flex justify-center shrink-0">{r.icon}</span>
            <span className="ml-[6px] whitespace-nowrap">{r.label}</span>
            {r.k && <span className="ml-auto mr-[19px]">{r.k}</span>}
            {r.sub && <ChevronRight size={13} strokeWidth={1.5} className="ml-auto mr-[6px] text-[#555]" />}
            {r.sel && <span className="absolute left-0 right-0 -top-[1px] -bottom-[3px] border-2 border-[#ff0000]" />}
          </div>
        ) : (
          <div key={i} className="h-[5.5px] flex items-center pl-[32px] pr-[1px]"><div className="w-full h-px bg-[#d4d4d4]" /></div>
        ))}
      </div>

      {/* Annotation */}
      <svg className="absolute left-0 top-0 pointer-events-none" width="1536" height="802">
        <line x1="400" y1="620" x2="694" y2="420" stroke="#ff0000" strokeWidth="2.600" />
        <path d="M680 420.500 695 419.500 688 432" fill="none" stroke="#ff0000" strokeWidth="2.400" />
      </svg>
      <div className="absolute left-[117px] top-[619px] w-[567px] h-[64px] bg-[#ffe699] border-2 border-[#bfbfbf] flex items-center justify-center text-[#ff0000] text-[37px] font-medium whitespace-nowrap">右クリックして「プロパティ」を選択</div>
    </div>
  )
}
